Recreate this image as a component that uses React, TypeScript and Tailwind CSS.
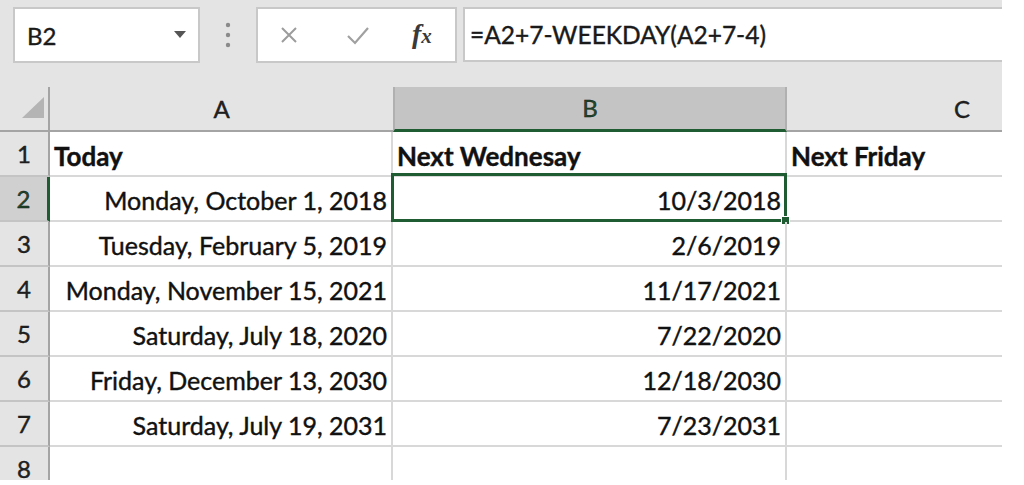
import React from "react";

const rows: [string, string, string][] = [
  ["Monday, October 1, 2018", "10/3/2018", ""],
  ["Tuesday, February 5, 2019", "2/6/2019", ""],
  ["Monday, November 15, 2021", "11/17/2021", ""],
  ["Saturday, July 18, 2020", "7/22/2020", ""],
  ["Friday, December 13, 2030", "12/18/2030", ""],
  ["Saturday, July 19, 2031", "7/23/2031", ""],
  ["", "", ""],
];

function Toolbar() {
  return (
    <div className="h-[87px] bg-[#e4e4e4] flex items-start pt-[7px] pl-[13px]">
      <div className="w-[187px] h-[56px] bg-white border-2 border-[#c8c8c8] flex items-center justify-between pl-[12px] pr-[12px]">
        <span className="text-[24px] leading-none text-[#1a1a1a] pt-[2px] [-webkit-text-stroke:0.4px_#1a1a1a]">B2</span>
        <svg width="12" height="8" viewBox="0 0 12 8">
          <path d="M0 0 L12 0 L6 7 Z" fill="#555" />
        </svg>
      </div>
      <div className="w-[56px] h-[56px] flex items-center justify-center">
        <svg width="6" height="26" viewBox="0 0 6 26">
          <circle cx="3" cy="3" r="2.2" fill="#8a8a8a" />
          <circle cx="3" cy="13" r="2.2" fill="#8a8a8a" />
          <circle cx="3" cy="23" r="2.2" fill="#8a8a8a" />
        </svg>
      </div>
      <div className="w-[201px] h-[56px] bg-white border-2 border-[#c8c8c8] relative">
        <svg className="absolute left-[21px] top-[16px]" width="20" height="20" viewBox="0 0 20 20">
          <path d="M3 3 L17 17 M17 3 L3 17" stroke="#9c9c9c" strokeWidth="2" fill="none" />
        </svg>
        <svg className="absolute left-[88px] top-[17px]" width="24" height="20" viewBox="0 0 24 20">
          <path d="M2 10 L9 17 L22 2" stroke="#a0a0a0" strokeWidth="2.2" fill="none" />
        </svg>
        <span className="absolute left-[154px] top-[11px] font-['Liberation_Serif',serif] italic font-bold text-[28px] leading-none text-[#3a3a3a]">
          f<span className="text-[21px]">x</span>
        </span>
      </div>
      <div className="flex-1 ml-[6px] h-[55px] bg-white border-2 border-r-0 border-[#c8c8c8] flex items-center pl-[5px]">
        <span className="text-[24.5px] leading-none text-[#1a1a1a] pt-[2px] [-webkit-text-stroke:0.4px_#1a1a1a]">=A2+7-WEEKDAY(A2+7-4)</span>
      </div>
    </div>
  );
}

function Grid() {
  return (
    <div className="h-[393px] overflow-hidden [-webkit-text-stroke:0.4px_#111]">
      <div className="flex h-[45px]">
        <div className="w-[50px] bg-[#e4e4e4] border-r-2 border-b-2 border-[#a4a4a4] relative">
          <svg className="absolute left-[22px] top-[10px]" width="22" height="21" viewBox="0 0 22 21">
            <path d="M22 0 L22 21 L0 21 Z" fill="#b4b4b4" />
          </svg>
        </div>
        <div className="w-[343px] bg-[#e4e4e4] border-b-2 border-[#a4a4a4] flex items-center justify-center text-[24px] text-[#222] leading-none">
          A
        </div>
        <div className="w-[394px] bg-[#c4c4c4] border-l-2 border-r-2 border-[#b0b0b0] border-b-[3px] border-b-[#1f5c32] flex items-center justify-center text-[24px] text-[#1f4a2c] leading-none">
          B
        </div>
        <div className="flex-1 bg-[#e4e4e4] border-b-2 border-[#a4a4a4] flex items-center text-[24px] text-[#222] leading-none pl-[167px]">
          C
        </div>
      </div>

      <div className="flex h-[45px]">
        <div className="w-[50px] bg-[#e4e4e4] border-r-2 border-r-[#a4a4a4] border-b-2 border-b-[#c4c4c4] flex items-center justify-center text-[24px] text-[#222] leading-none">
          1
        </div>
        <div className="w-[343px] border-b-2 border-r-2 border-[#d8d8d8] flex items-center pl-[4px] pt-[4px] font-bold text-[26px] leading-none text-[#111]">
          Today
        </div>
        <div className="w-[394px] border-b-2 border-r-2 border-[#d8d8d8] flex items-center pl-[4px] pt-[4px] font-bold text-[26px] leading-none text-[#111]">
          Next Wednesay
        </div>
        <div className="flex-1 border-b-2 border-[#d8d8d8] flex items-center pl-[4px] pt-[4px] font-bold text-[26px] leading-none text-[#111]">
          Next Friday
        </div>
      </div>

      {rows.map((r, i) => {
        const n = i + 2;
        const selected = n === 2;
        return (
          <div key={n} className="flex h-[45px]">
            <div
              className={
                selected
                  ? "w-[50px] bg-[#d0d0d0] border-r-[3px] border-r-[#1f5c32] border-b-2 border-b-[#c4c4c4] flex items-center justify-center text-[24px] text-[#1f4a2c] leading-none"
                  : "w-[50px] bg-[#e4e4e4] border-r-2 border-r-[#a4a4a4] border-b-2 border-b-[#c4c4c4] flex items-center justify-center text-[24px] text-[#222] leading-none"
              }
            >
              {n}
            </div>
            <div className="w-[343px] border-b-2 border-r-2 border-[#d8d8d8] flex items-center justify-end pr-[4px] pt-[4px] text-[25px] leading-none text-[#111]">
              {r[0]}
            </div>
            <div className="w-[394px] border-b-2 border-r-2 border-[#d8d8d8] flex items-center justify-end pr-[4px] pt-[4px] text-[25px] leading-none text-[#111] relative">
              {r[1]}
              {selected && (
                <div className="absolute top-[-4px] left-[-2px] right-[-2px] bottom-[-2px] border-[3px] border-[#1f5c32]">
                  <div className="absolute right-[-6px] bottom-[-6px] w-[9px] h-[9px] bg-[#1f5c32] border border-white" />
                </div>
              )}
            </div>
            <div className="flex-1 border-b-2 border-[#d8d8d8] flex items-center pl-[4px] pt-[4px] text-[25px] leading-none text-[#111]">
              {r[2]}
            </div>
          </div>
        );
      })}
    </div>
  );
}

export default function App() {
  return (
    <div className="w-[1024px] h-[485px] bg-white overflow-hidden font-['Lato',sans-serif]">
      <div className="w-[1002px]">
        <Toolbar />
        <Grid />
      </div>
    </div>
  );
}
